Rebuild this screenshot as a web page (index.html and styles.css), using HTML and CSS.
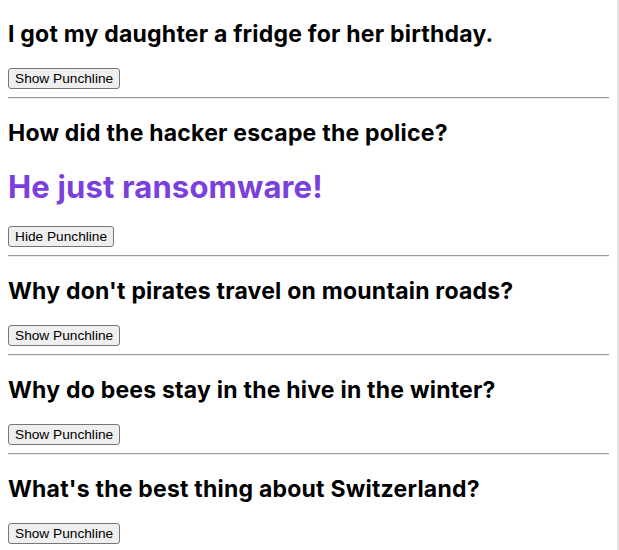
FILE: index.html
```html
<!DOCTYPE html>
<html lang="en">
<head>
<meta charset="utf-8">
<title>Jokes</title>
<link rel="stylesheet" href="styles.css">
</head>
<body>
<div class="joke">
  <h2 class="setup">I got my daughter a fridge for her birthday.</h2>
  <button class="toggle">Show Punchline</button>
  <hr class="divider">
</div>
<div class="joke">
  <h2 class="setup">How did the hacker escape the police?</h2>
  <h1 class="punchline">He just ransomware!</h1>
  <button class="toggle">Hide Punchline</button>
  <hr class="divider">
</div>
<div class="joke">
  <h2 class="setup">Why don't pirates travel on mountain roads?</h2>
  <button class="toggle">Show Punchline</button>
  <hr class="divider">
</div>
<div class="joke">
  <h2 class="setup">Why do bees stay in the hive in the winter?</h2>
  <button class="toggle">Show Punchline</button>
  <hr class="divider">
</div>
<div class="joke">
  <h2 class="setup">What's the best thing about Switzerland?</h2>
  <button class="toggle">Show Punchline</button>
  <hr class="divider">
</div>
</body>
</html>
```
FILE: styles.css
```css
html {
  background: #fff;
  border-right: 2px solid #e4e4e4;
  min-height: 100%;
}
body {
  margin: 0 8px 8px 8px;
  font-family: "Inter", "Liberation Sans", sans-serif;
  color: #000;
}
.setup {
  font-size: 23px;
  font-weight: 700;
  margin: 20px 0;
  line-height: 28px;
  letter-spacing: 0.22px;
}
.punchline {
  font-size: 31px;
  font-weight: 700;
  color: #7a3fdc;
  margin: 21px 0;
  line-height: 37px;
  letter-spacing: 0.15px;
}
.toggle {
  display: block;
  font-family: "Liberation Sans", Arial, sans-serif;
  font-size: 13.7px;
  color: #000;
  background: #efefef;
  border: 1px solid #767676;
  border-radius: 3px;
  padding: 1px 6px;
  height: 21px;
  line-height: 17px;
}
.divider {
  margin: 8px 0;
  border: none;
  border-top: 1px solid #9a9a9a;
  border-bottom: 1px solid #eee;
  height: 0;
}
```
